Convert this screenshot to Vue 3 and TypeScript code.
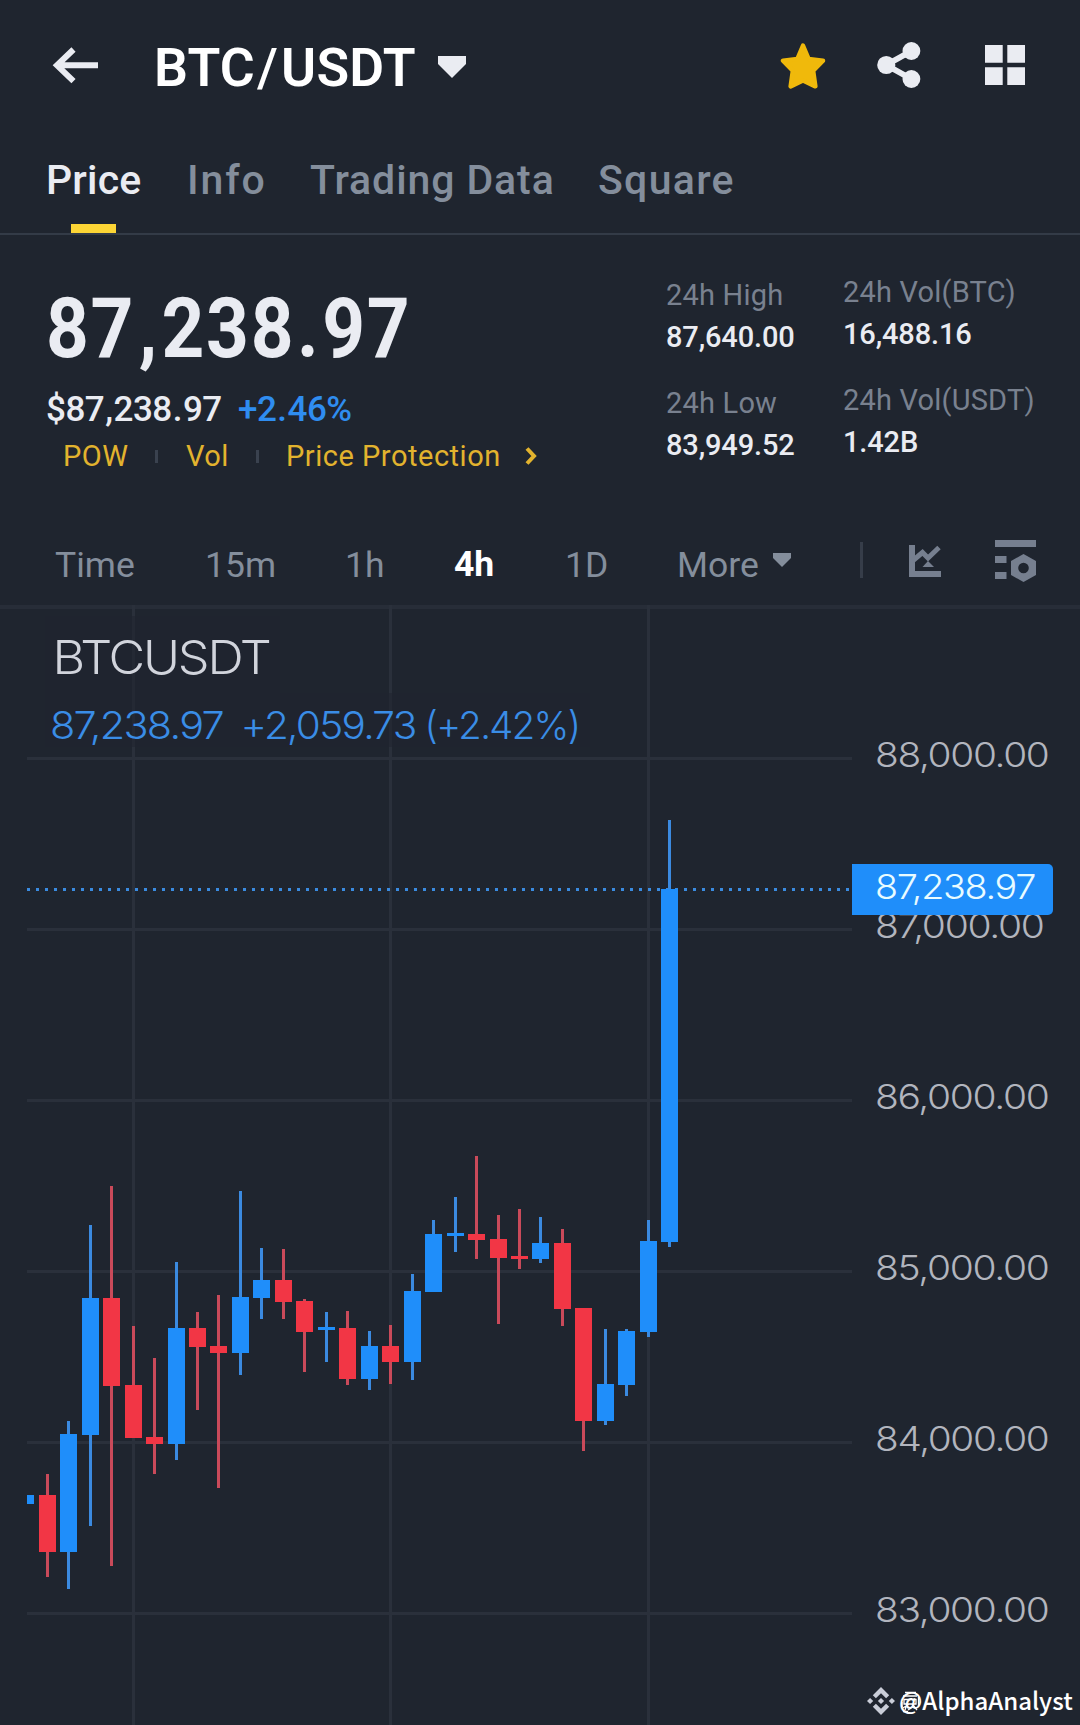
<script setup lang="ts">
interface Candle {
  x: number
  open: number
  close: number
  high: number
  low: number
  up: boolean
}

interface Stat {
  label: string
  value: string
}

const tabs: string[] = ['Price', 'Info', 'Trading Data', 'Square']
const intervals: string[] = ['Time', '15m', '1h', '4h', '1D']

const statColumns: Stat[][] = [
  [
    { label: '24h High', value: '87,640.00' },
    { label: '24h Low', value: '83,949.52' },
  ],
  [
    { label: '24h Vol(BTC)', value: '16,488.16' },
    { label: '24h Vol(USDT)', value: '1.42B' },
  ],
]

// [left, body top, body bottom, wick top, wick bottom, rising]
const raw: [number, number, number, number, number, 0 | 1][] = [
  [39, 1495, 1552, 1474, 1577, 0],
  [60, 1434, 1552, 1421, 1589, 1],
  [82, 1298, 1435, 1225, 1526, 1],
  [103, 1298, 1386, 1186, 1566, 0],
  [125, 1385, 1438, 1326, 1438, 0],
  [146, 1437, 1444, 1358, 1474, 0],
  [168, 1328, 1444, 1262, 1460, 1],
  [189, 1328, 1347, 1312, 1410, 0],
  [210, 1346, 1353, 1295, 1488, 0],
  [232, 1297, 1353, 1191, 1375, 1],
  [253, 1280, 1298, 1248, 1319, 1],
  [275, 1280, 1302, 1249, 1319, 0],
  [296, 1301, 1332, 1299, 1372, 0],
  [318, 1327, 1330, 1312, 1362, 1],
  [339, 1328, 1379, 1311, 1385, 0],
  [361, 1346, 1379, 1331, 1390, 1],
  [382, 1346, 1362, 1325, 1384, 0],
  [404, 1291, 1362, 1274, 1380, 1],
  [425, 1234, 1292, 1220, 1292, 1],
  [447, 1233, 1236, 1197, 1252, 1],
  [468, 1234, 1240, 1156, 1259, 0],
  [490, 1239, 1258, 1215, 1324, 0],
  [511, 1256, 1259, 1209, 1269, 0],
  [532, 1243, 1259, 1217, 1263, 1],
  [554, 1243, 1309, 1229, 1326, 0],
  [575, 1308, 1421, 1308, 1451, 0],
  [597, 1384, 1421, 1329, 1425, 1],
  [618, 1331, 1385, 1329, 1396, 1],
  [640, 1241, 1332, 1220, 1337, 1],
  [661, 889, 1242, 820, 1247, 1],
]
const candles: Candle[] = raw.map(([x, open, close, high, low, up]) => ({
  x, open, close, high, low, up: up === 1,
}))

const columns: number[] = [132, 389, 647]
const levels = [
  { line: 757, text: '88,000.00', width: 173.5 },
  { line: 928, text: '87,000.00', width: 168.5 },
  { line: 1099, text: '86,000.00', width: 173.5 },
  { line: 1270, text: '85,000.00', width: 173.5 },
  { line: 1441, text: '84,000.00', width: 173.5 },
  { line: 1612, text: '83,000.00', width: 173.5 },
]
</script>

<template>
  <main class="screen">
    <header class="topbar">
      <svg class="back" width="46" height="37" viewBox="0 0 46 37">
        <path d="M21.5 2.5 5 18.3 21.5 34.2M5 18.3H46" fill="none" stroke="#eaecf2" stroke-width="6" />
      </svg>
      <h1 class="pair">BTC<i>/</i>USDT</h1>
      <svg class="caret" width="28" height="22" viewBox="0 0 28 22">
        <path d="M0 0H28V8L14 22 0 8Z" fill="#eaecf2" />
      </svg>
      <div class="actions">
        <svg class="star" width="46" height="48" viewBox="0 0 46 48">
          <path
            d="M23 3.600 28.700 17 43 18.700 33.200 28.800 35.400 44.400 23 38.400 10.600 44.400 12.800 28.800 3 18.700 17.300 17Z"
            fill="#f0b90b" stroke="#f0b90b" stroke-width="4.400" stroke-linejoin="round"
          />
        </svg>
        <svg width="44" height="48" viewBox="0 0 44 48">
          <path d="M34.4 10 9.3 24 34.4 38" fill="none" stroke="#eaecf2" stroke-width="6" />
          <circle cx="34.4" cy="10" r="8.9" fill="#eaecf2" />
          <circle cx="9.3" cy="24" r="9.1" fill="#eaecf2" />
          <circle cx="34.4" cy="38" r="8.9" fill="#eaecf2" />
        </svg>
        <svg width="40" height="40" viewBox="0 0 40 40">
          <path d="M0 0H17.7V17.7H0ZM22.3 0H40V17.7H22.3ZM0 22.3H17.7V40H0ZM22.3 22.3H40V40H22.3Z" fill="#eaecf2" />
        </svg>
      </div>
    </header>

    <nav class="tabs">
      <span v-for="(tab, i) in tabs" :key="tab" class="tab" :class="{ active: i === 0 }">{{ tab }}</span>
    </nav>

    <section class="summary">
      <div class="quote">
        <div class="price">87<i class="comma">,</i>238<i>.</i>97</div>
        <div class="fiat">
          <span>$87<i>,</i>238<i>.</i>97</span>
          <span class="change">+2<i>.</i>46%</span>
        </div>
        <div class="tags">
          <span class="tag">POW</span>
          <span class="bar"></span>
          <span class="tag">Vol</span>
          <span class="bar"></span>
          <span class="tag protection">Price Protection</span>
          <svg width="12" height="18" viewBox="0 0 12 18">
            <path d="M2 1.5 9 9 2 16.5" fill="none" stroke="#e2b32e" stroke-width="4" />
          </svg>
        </div>
      </div>
      <div class="stats">
        <div v-for="(column, c) in statColumns" :key="c" class="stat-column">
          <dl v-for="stat in column" :key="stat.label" class="stat">
            <dt>{{ stat.label }}</dt>
            <dd>{{ stat.value }}</dd>
          </dl>
        </div>
      </div>
    </section>

    <nav class="intervals">
      <span v-for="item in intervals" :key="item" class="interval" :class="{ active: item === '4h' }">{{ item }}</span>
      <span class="more">
        <span class="interval">More</span>
        <svg width="18" height="14" viewBox="0 0 18 14"><path d="M0 0H18V5L9 14 0 5Z" fill="#848e9c" /></svg>
      </span>
      <span class="separator"></span>
      <svg class="chart-icon" width="32" height="32" viewBox="0 0 32 32">
        <path d="M0 0H6V26H32V32H0Z" fill="#767f8f" />
        <path d="M4 15.5 13.5 7.500 19 13 30 2.500" fill="none" stroke="#767f8f" stroke-width="5" />
        <path d="M19 16 25 22H13.500Z" fill="#767f8f" />
      </svg>
      <svg width="41" height="42" viewBox="0 0 41 42">
        <path d="M0 0H41V7H0ZM0 16H11.500V23H0ZM0 32H11.500V39H0Z" fill="#767f8f" />
        <path
          d="M28.500 14 41 21V35L28.500 42 16 35V21ZM28.500 22.700A5.300 5.300 0 1 0 28.500 33.300 5.300 5.300 0 1 0 28.500 22.700Z"
          fill="#767f8f" fill-rule="evenodd"
        />
      </svg>
    </nav>

    <svg class="chart" width="1080" height="1120" viewBox="0 605 1080 1120">
      <rect x="0" y="605" width="1080" height="4" fill="#272d38" />
      <rect v-for="x in columns" :key="x" :x="x" y="605" width="3" height="1120" fill="#2a303b" />
      <rect v-for="l in levels" :key="l.line" x="27" :y="l.line" width="825" height="3" fill="#2a303b" />

      <path d="M45 616H280V693H590V747H45Z" fill="#1f252f" fill-opacity="0.55" />
      <text class="symbol" x="52.500" y="674" textLength="217" lengthAdjust="spacingAndGlyphs">BTCUSDT</text>
      <text class="legend" x="50" y="738.500" textLength="173" lengthAdjust="spacingAndGlyphs">87,238.97</text>
      <text class="legend" x="240.500" y="738.500" textLength="175" lengthAdjust="spacingAndGlyphs">+2,059.73</text>
      <text class="legend" x="424.500" y="738.500" textLength="155" lengthAdjust="spacingAndGlyphs">(+2.42%)</text>

      <line x1="27" x2="852" y1="889.500" y2="889.500" stroke="#3a8be0" stroke-width="3" stroke-dasharray="3 6" />

      <rect x="27" y="1495" width="7" height="9" fill="#1f8efa" />
      <g v-for="c in candles" :key="c.x">
        <rect :x="c.x + 7" :y="c.high" width="3" :height="c.low - c.high" :fill="c.up ? '#3b8ae0' : '#c94a5a'" />
        <rect :x="c.x" :y="c.open" width="17" :height="c.close - c.open" :fill="c.up ? '#1f8efa' : '#f23645'" />
      </g>

      <text
        v-for="l in levels" :key="l.text" class="level" x="875" :y="l.line + 9.500"
        :textLength="l.width" lengthAdjust="spacingAndGlyphs"
      >{{ l.text }}</text>
      <path d="M852 864H1048A5 5 0 0 1 1053 869V910A5 5 0 0 1 1048 915H852Z" fill="#1f8efa" />
      <text class="level current" x="875" y="898.500" textLength="160" lengthAdjust="spacingAndGlyphs">87,238.97</text>
    </svg>

    <div class="watermark">
      <svg width="28" height="28" viewBox="0 0 28 28">
        <path
          d="M14 0 22.200 8.200 19.100 11.300 14 6.200 8.900 11.300 5.800 8.200ZM14 28 5.800 19.800 8.900 16.700 14 21.800 19.100 16.700 22.200 19.800ZM14 10.900 17.100 14 14 17.100 10.900 14ZM3.100 10.900 6.200 14 3.100 17.100 0 14ZM24.900 10.900 28 14 24.900 17.100 21.800 14Z"
          fill="#c9cdd8"
        />
      </svg>
      <span class="handle">
        <span class="at">@</span>AlphaAnalyst
        <svg class="scribble" width="22" height="24" viewBox="0 0 22 24">
          <path
            d="M6 2.500H17M4 6H18M5 9.500H17V14H5ZM3 12V17M8 14 6 20M13 14 18 20M4 18 10 14M9 20 14 17M4 21.500H9M19.500 7V16"
            fill="none" stroke="#fff" stroke-width="1.300"
          />
        </svg>
      </span>
    </div>
  </main>
</template>

<style>
body {
  margin: 0;
  background: #1f252f;
}
</style>

<style scoped>
.screen {
  position: relative;
  width: 1080px;
  height: 1725px;
  overflow: hidden;
  background: #1f252f;
  color: #eaecf2;
  font-family: Roboto, "Liberation Sans", sans-serif;
}

svg {
  display: block;
  flex: none;
}

i {
  font-style: normal;
}

.topbar {
  display: flex;
  align-items: center;
  height: 134px;
  padding: 0 55px 0 52px;
  box-sizing: border-box;
}

.back {
  margin-bottom: 4px;
}

.pair {
  width: 262px;
  margin: 2px 0 0 56px;
  color: #fff;
  font-size: 53.500px;
  font-weight: 600;
  line-height: 1;
  letter-spacing: 0.200px;
}

.pair i {
  padding: 0 3px 0 2px;
  font-weight: 500;
}

.caret {
  margin-left: 22px;
}

.actions {
  display: flex;
  align-items: center;
  margin: 0 0 4px auto;
}

.star {
  margin-top: 2px;
}

.actions svg:nth-child(2) {
  margin-left: 51px;
}

.actions svg:nth-child(3) {
  margin-left: 64px;
}

.tabs {
  display: grid;
  grid-template-columns: 141px 123px 288px auto;
  height: 101px;
  padding-left: 46px;
  box-sizing: border-box;
  border-bottom: 2px solid #333b47;
}

.tab {
  position: relative;
  height: 99px;
  color: #848e9c;
  font-size: 41px;
  font-weight: 500;
  line-height: 92px;
  letter-spacing: 0.900px;
  white-space: nowrap;
}

.tab:nth-child(2) {
  letter-spacing: 1.900px;
}

.tab:nth-child(4) {
  letter-spacing: 1.300px;
}

.tab.active {
  color: #eaecf2;
  letter-spacing: 0.200px;
}

.tab.active::after {
  position: absolute;
  bottom: 0;
  left: 25px;
  width: 45px;
  height: 9px;
  background: #fcd535;
  content: "";
}

.summary {
  display: flex;
  height: 286px;
}

.quote {
  width: 620px;
  padding: 44px 0 0 46px;
}

.price {
  width: 500px;
  height: 100px;
  font-size: 83px;
  font-weight: 700;
  line-height: 100px;
  letter-spacing: 1.900px;
  white-space: nowrap;
  transform: scaleX(0.9);
  transform-origin: left;
}

.price i {
  padding: 0 2px;
}

.price .comma {
  padding: 0 3px 0 4px;
}

.fiat {
  display: grid;
  grid-template-columns: 192px auto;
  height: 50px;
  margin-top: 6px;
  font-size: 35px;
  font-weight: 500;
  line-height: 50px;
  letter-spacing: -0.500px;
}

.fiat i {
  padding: 0 1px;
}

.change {
  color: #2f8df0;
}

.tags {
  display: grid;
  grid-template-columns: 92px 31px 70px 30px 239px 12px;
  align-items: center;
  height: 35px;
  margin: 4px 0 0 17px;
  color: #e2b32e;
  font-size: 29px;
  line-height: 35px;
  letter-spacing: 0.500px;
}

.tags svg {
  margin-bottom: 2px;
}

.bar {
  width: 3px;
  height: 13px;
  background: #3a424f;
}

.protection {
  letter-spacing: 0.520px;
}

.stats {
  display: flex;
  padding-top: 39px;
}

.stat-column {
  width: 177px;
}

.stat-column:nth-child(2) {
  margin-top: -3px;
}

.stat {
  height: 108px;
  margin: 0;
  font-size: 29px;
  line-height: 42px;
  white-space: nowrap;
}

.stat dt {
  color: #79818f;
  letter-spacing: 0.200px;
}

.stat dd {
  margin: 0;
  font-weight: 500;
  letter-spacing: -0.150px;
}

.intervals {
  display: grid;
  grid-template-columns: 150px 140px 109px 111px 112px 183px 49px 86px 41px;
  align-items: center;
  height: 84px;
  padding-left: 55px;
  color: #848e9c;
  font-size: 35.500px;
  font-weight: 400;
  line-height: 80px;
}

.interval {
  padding-top: 4px;
}

.intervals .active {
  padding: 2px 0 0;
  color: #fff;
  font-weight: 700;
}

.more {
  display: flex;
  align-items: center;
  gap: 14px;
}

.more svg {
  margin-bottom: 6px;
}

.separator {
  width: 3px;
  height: 36px;
  background: #363d49;
  margin-bottom: 6px;
}

.intervals > svg {
  margin-bottom: 4px;
}

.chart {
  font-family: Inter, "Liberation Sans", sans-serif;
  font-weight: 300;
}

.symbol {
  fill: #d1d4dc;
  font-size: 46.500px;
  letter-spacing: -2px;
}

.legend {
  fill: #3a8de6;
  font-size: 38.500px;
  letter-spacing: -1.600px;
}

.level {
  fill: #b2b5be;
  font-size: 34.500px;
  letter-spacing: -1.200px;
}

.current {
  fill: #e8fbff;
}

.watermark {
  position: absolute;
  top: 1683px;
  left: 867px;
  display: flex;
  align-items: center;
  gap: 4px;
  height: 34px;
}

.watermark > svg {
  margin-top: 2px;
}

.handle {
  position: relative;
  color: #fff;
  font-family: "Noto Sans CJK SC", "Noto Sans", sans-serif;
  font-size: 24px;
  font-weight: 500;
  line-height: 34px;
  white-space: nowrap;
}

.scribble {
  position: absolute;
  top: 7px;
  left: 0;
}
</style>
